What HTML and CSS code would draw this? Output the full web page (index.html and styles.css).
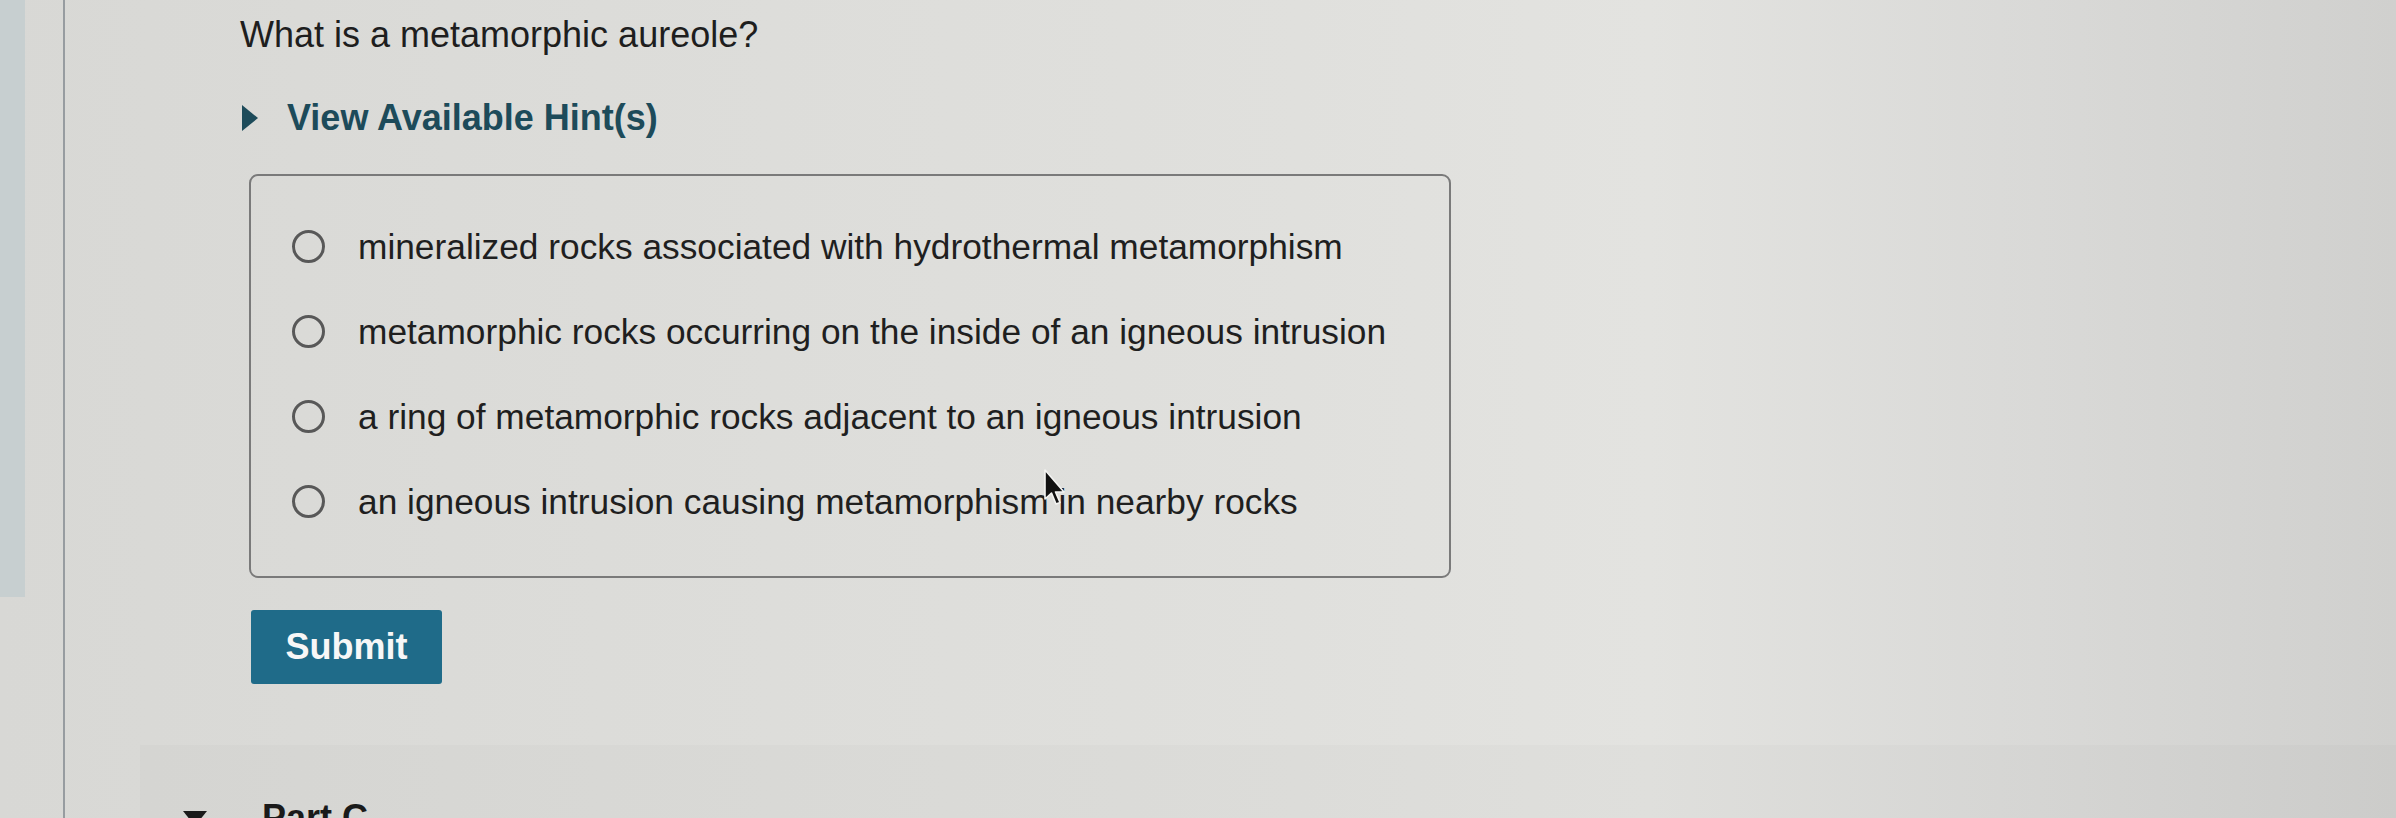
FILE: index.html
```html
<!DOCTYPE html>
<html lang="en">
<head>
<meta charset="utf-8">
<title>Part B</title>
<link rel="stylesheet" href="styles.css">
</head>
<body>
<div class="page">
  <div class="rail"></div>
  <div class="gutter"></div>
  <div class="panel">
    <div class="content">
      <p class="question">What is a metamorphic aureole?</p>
      <div class="hint">
        <svg class="hint-caret" width="18" height="28" viewBox="0 0 18 28"><polygon points="1,1 17,14 1,27" fill="#1d4b5a"/></svg>
        <span class="hint-label">View Available Hint(s)</span>
      </div>
      <div class="choices">
        <label class="choice"><span class="radio"></span><span class="choice-text">mineralized rocks associated with hydrothermal metamorphism</span></label>
        <label class="choice"><span class="radio"></span><span class="choice-text">metamorphic rocks occurring on the inside of an igneous intrusion</span></label>
        <label class="choice"><span class="radio"></span><span class="choice-text">a ring of metamorphic rocks adjacent to an igneous intrusion</span></label>
        <label class="choice choice-last"><span class="radio"></span><span class="choice-text">an igneous intrusion causing metamorphism in nearby rocks</span>
          <svg class="cursor" width="24" height="38" viewBox="0 0 24 38"><path d="M2 1 L2 30 L8.5 24 L13 35 L17 33.5 L12.5 23 L21 23 Z" fill="#111" stroke="#f4f4f2" stroke-width="1.6" stroke-linejoin="round"/></svg>
        </label>
      </div>
      <button class="submit" type="button">Submit</button>
    </div>
    <div class="part">
      <svg class="part-caret" width="26" height="18" viewBox="0 0 26 18"><polygon points="1,2 25,2 13,17" fill="#1a1a1a"/></svg>
      <span class="part-label">Part C</span>
    </div>
  </div>
</div>
</body>
</html>
```

FILE: styles.css
```css
html, body {
  margin: 0;
  padding: 0;
}

body {
  width: 2396px;
  height: 818px;
  overflow: hidden;
  font-family: "Liberation Sans", Arial, sans-serif;
  color: #1e1e1e;
  background: linear-gradient(90deg, #d8d8d5 0px, #dcdcd9 600px, #e0e0dd 1300px, #e3e3e0 1650px, #dadad8 2000px, #d0d0ce 2396px);
}

.page {
  display: flex;
  height: 818px;
}

.rail {
  width: 25px;
  height: 597px;
  background: #c7cfd0;
  flex-shrink: 0;
}

.gutter {
  width: 38px;
  flex-shrink: 0;
}

.panel {
  flex: 1;
  border-left: 2px solid #979ca0;
  display: flex;
  flex-direction: column;
}

.content {
  padding-left: 175px;
  padding-top: 14px;
  display: flex;
  flex-direction: column;
  align-items: flex-start;
}

.question {
  margin: 0;
  font-size: 36px;
  line-height: 41px;
  color: #1e1e1e;
}

.hint {
  margin-top: 42px;
  margin-left: 1px;
  display: flex;
  align-items: center;
  gap: 28px;
  height: 41px;
}

.hint-caret {
  display: block;
}

.hint-label {
  font-size: 36px;
  font-weight: bold;
  line-height: 41px;
  color: #1d4b5a;
}

.choices {
  margin-top: 36px;
  margin-left: 9px;
  width: 1157px;
  box-sizing: content-box;
  border: 2px solid #7a7a7a;
  border-radius: 9px;
  padding: 50px 0 54px 41px;
  display: flex;
  flex-direction: column;
  gap: 44px;
}

.choice {
  display: flex;
  align-items: center;
  gap: 33px;
  height: 41px;
  position: relative;
}

.radio {
  width: 27px;
  height: 27px;
  border: 3px solid #585858;
  border-radius: 50%;
  flex-shrink: 0;
}

.choice-text {
  font-size: 35.3px;
  line-height: 41px;
  color: #1f1f1f;
}

.cursor {
  position: absolute;
  left: 751px;
  top: -12px;
}

.submit {
  margin-top: 32px;
  margin-left: 11px;
  width: 191px;
  height: 74px;
  border: none;
  border-radius: 3px;
  background: #1f6b89;
  color: #f7f7f7;
  font-family: "Liberation Sans", Arial, sans-serif;
  font-size: 36px;
  font-weight: bold;
  padding: 0;
}

.part {
  margin-top: 61px;
  margin-left: 75px;
  flex: 1;
  background: rgba(120, 120, 115, 0.04);
  display: flex;
  align-items: flex-start;
  padding-top: 60px;
  padding-left: 42px;
  gap: 54px;
}

.part-caret {
  display: block;
  margin-top: 4px;
}

.part-label {
  font-size: 36px;
  font-weight: bold;
  line-height: 41px;
  color: #1a1a1a;
  margin-top: -8px;
}
```
